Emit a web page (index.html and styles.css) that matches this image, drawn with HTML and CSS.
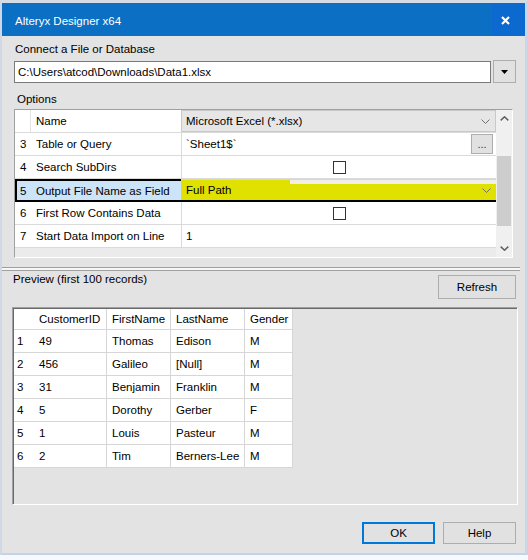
FILE: index.html
```html
<!DOCTYPE html>
<html>
<head>
<meta charset="utf-8">
<title>Alteryx Designer x64</title>
<link rel="stylesheet" href="styles.css">
</head>
<body>
<div class="window">
  <div class="titlebar">
    <div class="title">Alteryx Designer x64</div>
    <div class="close"><svg width="9" height="9" viewBox="0 0 9 9"><path d="M1 1 L8 8 M8 1 L1 8" stroke="#fff" stroke-width="2.2" fill="none"/></svg></div>
  </div>
  <div class="main">
    <div class="connect">Connect a File or Database</div>
    <div class="pathrow">
      <div class="pathinput">C:\Users\atcod\Downloads\Data1.xlsx</div>
      <div class="dropbtn"><svg width="7" height="4" viewBox="0 0 7 4"><path d="M0 0 H7 L3.5 4 Z" fill="#000"/></svg></div>
    </div>
    <div class="options">Options</div>
    <div class="grid">
      <div class="rows">
        <div class="prow head">
          <div class="num headnum"></div>
          <div class="name">Name</div>
          <div class="val combo">Microsoft Excel (*.xlsx)<svg class="chev" width="9" height="5" viewBox="0 0 9 5"><path d="M0.5 0.5 L4.5 4.5 L8.5 0.5" fill="none" stroke="#707070" stroke-width="1"/></svg></div>
        </div>
        <div class="prow">
          <div class="num">3</div>
          <div class="name">Table or Query</div>
          <div class="val">`Sheet1$`<div class="ellipsis">...</div></div>
        </div>
        <div class="prow">
          <div class="num">4</div>
          <div class="name">Search SubDirs</div>
          <div class="val center"><div class="cb"></div></div>
        </div>
        <div class="prow sel">
          <div class="num">5</div>
          <div class="name">Output File Name as Field</div>
          <div class="val hl">Full Path<svg class="chev" width="9" height="5" viewBox="0 0 9 5"><path d="M0.5 0.5 L4.5 4.5 L8.5 0.5" fill="none" stroke="#707070" stroke-width="1"/></svg></div>
        </div>
        <div class="prow">
          <div class="num">6</div>
          <div class="name">First Row Contains Data</div>
          <div class="val center"><div class="cb"></div></div>
        </div>
        <div class="prow">
          <div class="num">7</div>
          <div class="name">Start Data Import on Line</div>
          <div class="val">1</div>
        </div>
      </div>
      <div class="scrollbar">
        <div class="sbbtn"><svg width="9" height="5" viewBox="0 0 9 5"><path d="M0.7 4.4 L4.5 0.8 L8.3 4.4" fill="none" stroke="#606060" stroke-width="1.5"/></svg></div>
        <div class="sbspace"></div>
        <div class="thumb"></div>
        <div class="sbrest"></div>
        <div class="sbbtn"><svg width="9" height="5" viewBox="0 0 9 5"><path d="M0.7 0.6 L4.5 4.2 L8.3 0.6" fill="none" stroke="#606060" stroke-width="1.5"/></svg></div>
      </div>
    </div>
    <div class="splitter"></div>
    <div class="previewrow">
      <div class="previewlabel">Preview (first 100 records)</div>
      <div class="btn refresh">Refresh</div>
    </div>
    <div class="panel">
      <div class="table">
        <div class="c rn"></div><div class="c">CustomerID</div><div class="c">FirstName</div><div class="c">LastName</div><div class="c">Gender</div>
        <div class="c rn">1</div><div class="c">49</div><div class="c">Thomas</div><div class="c">Edison</div><div class="c">M</div>
        <div class="c rn">2</div><div class="c">456</div><div class="c">Galileo</div><div class="c">[Null]</div><div class="c">M</div>
        <div class="c rn">3</div><div class="c">31</div><div class="c">Benjamin</div><div class="c">Franklin</div><div class="c">M</div>
        <div class="c rn">4</div><div class="c">5</div><div class="c">Dorothy</div><div class="c">Gerber</div><div class="c">F</div>
        <div class="c rn">5</div><div class="c">1</div><div class="c">Louis</div><div class="c">Pasteur</div><div class="c">M</div>
        <div class="c rn">6</div><div class="c">2</div><div class="c">Tim</div><div class="c">Berners-Lee</div><div class="c">M</div>
      </div>
    </div>
    <div class="buttons">
      <div class="btn ok">OK</div>
      <div class="btn">Help</div>
    </div>
  </div>
</div>
</body>
</html>
```
FILE: styles.css
```css
* { box-sizing: border-box; }
html, body { margin: 0; padding: 0; }
body {
  width: 528px;
  height: 560px;
  overflow: hidden;
  background: #f6f9fe;
  font-family: "Liberation Sans", Arial, sans-serif;
  font-size: 11.5px;
  line-height: 16px;
  color: #000;
}
.window {
  width: 528px;
  height: 555px;
  border-style: solid;
  border-width: 3px 3px 2px 2px;
  border-color: #d6dce4 #c8d6ea #c4d2e7 #cfd8e4;
  background: #e3e3e3;
  display: flex;
  flex-direction: column;
}
.titlebar {
  flex: none;
  height: 33px;
  background: #0b6fc4;
  color: #fff;
  display: flex;
}
.title { flex: 1; padding: 10px 0 0 13px; }
.close { width: 33px; background: #0c69cf; padding: 13px 0 0 9px; }
.close svg { display: block; }
.main { flex: 1; display: flex; flex-direction: column; }
.connect { margin-top: 5px; padding-left: 13px; }
.pathrow { display: flex; align-items: center; margin-top: 3px; padding-left: 12px; height: 23px; }
.pathinput {
  width: 477px; height: 22px; background: #fff;
  border: 1px solid #7a7a7a; padding-left: 3px;
  display: flex; align-items: center;
}
.dropbtn {
  margin-left: 2px; width: 23px; height: 23px;
  background: #e1e1e1; border: 1px solid #adadad;
  display: flex; align-items: center; justify-content: center;
}
.dropbtn svg { display: block; }
.options { margin-top: 8px; padding-left: 15px; }
.grid {
  margin: 2px 0 0 12px;
  width: 499px; height: 149px;
  border: 1px solid; border-color: #a0a0a0 #fff #fff #a0a0a0;
  display: flex; background: #f0f0f0;
}
.rows { width: 481px; background: #ebebeb; }
.prow {
  display: grid;
  grid-template-columns: 16px 150px 315px;
  height: 23px;
  border-bottom: 1px solid #dadada;
  background: #fff;
}
.prow > div { display: flex; align-items: center; white-space: nowrap; }
.num { padding-left: 5px; }
.headnum { border-right: 1px solid #e3e3e3; }
.name { padding-left: 5px; }
.val { border-left: 1px solid #dadada; padding-left: 4px; }
.combo { background: #e6e6e6; border: 1px solid #c9c9c9; }
.chev { margin-left: auto; margin-right: 5px; display: block; }
.center { justify-content: center; padding-left: 0; }
.cb { width: 13px; height: 13px; border: 1px solid #333; background: #fff; }
.ellipsis {
  margin-left: auto; margin-right: 3px;
  width: 22px; height: 20px;
  background: #e1e1e1; border: 1px solid #adadad;
  color: #334; text-align: center; line-height: 16px;
  font-size: 11px; padding-top: 1px;
}
.prow.sel {
  grid-template-columns: 14px 150px 315px;
  border-left: 2px solid #000;
  border-bottom: 2px solid #000;
}
.sel .num, .sel .name { background: #cce4f7; border-top: 2px solid #000; }
.sel .num { padding-left: 3px; }
.sel .hl {
  border-left: none;
  border-top: 1px solid #d6d6d6;
  padding-left: 5px;
  background:
    linear-gradient(#efefe6, #efefe6) 109px 0 / 206px 4px no-repeat,
    #e1e100;
}
.scrollbar { width: 16px; background: #f0f0f0; display: flex; flex-direction: column; }
.sbbtn { height: 17px; display: flex; align-items: center; justify-content: center; flex: none; }
.sbbtn svg { display: block; }
.sbspace { height: 29px; flex: none; }
.thumb { height: 70px; margin: 0 1px; background: #cdcdcd; flex: none; }
.sbrest { flex: 1; }
.splitter {
  margin: 9px 5px 0 0;
  height: 4px;
  border-top: 1px solid #a0a0a0;
  border-bottom: 1px solid #a0a0a0;
  background: #f7f7f7;
}
.previewrow { display: flex; justify-content: space-between; align-items: flex-start; padding: 0 9px 0 11px; }
.btn {
  width: 73px; height: 22px;
  background: #e1e1e1; border: 1px solid #adadad;
  display: flex; align-items: center; justify-content: center;
}
.refresh { width: 78px; height: 24px; margin-top: 4px; }
.panel {
  margin: 8px 0 0 10px;
  width: 506px; height: 198px;
  border: 1px solid; border-color: #a0a0a0 #fff #fff #a0a0a0;
  box-shadow: inset 1px 1px 0 #696969;
  padding: 1px 0 0 1px;
  background: #e3e3e3;
}
.table {
  display: grid;
  grid-template-columns: 19px 74px 64px 74px 48px;
  grid-template-rows: 21px repeat(6, 23px);
  width: 279px;
}
.c {
  background: #fff;
  border-right: 1px solid #d6d6d6;
  border-bottom: 1px solid #d6d6d6;
  padding-left: 5px;
  display: flex; align-items: center; white-space: nowrap;
}
.c:nth-child(5n+2) { padding-left: 6px; }
.c.rn { border-right: none; padding-left: 3px; }
.buttons { display: flex; justify-content: flex-end; gap: 8px; margin-top: 17px; padding-right: 9px; }
.ok { border: 2px solid #0078d7; }
```
